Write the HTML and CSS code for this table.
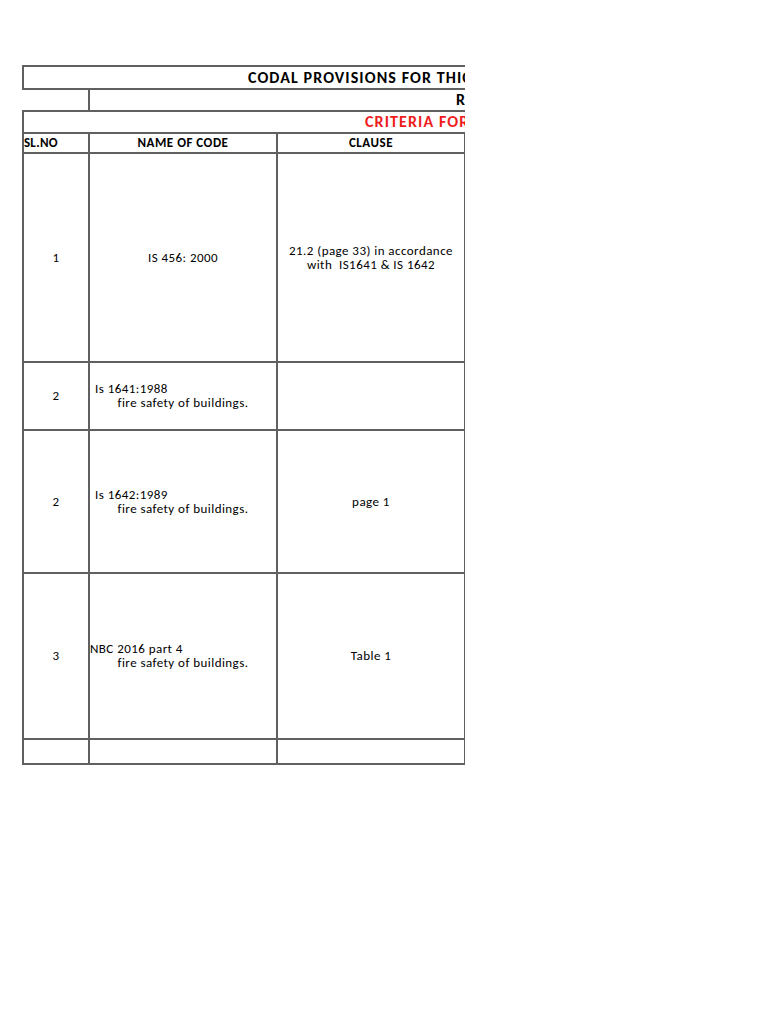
FILE: index.html
```html
<!DOCTYPE html>
<html>
<head>
<meta charset="utf-8">
<link rel="stylesheet" href="styles.css">
</head>
<body>
<div class="sheet">
  <table class="grid">
    <colgroup>
      <col class="c1"><col class="c2"><col class="c3"><col class="c4">
    </colgroup>
    <tr class="r-title">
      <td colspan="4" class="title"><span>CODAL PROVISIONS FOR THICKNESS</span></td>
    </tr>
    <tr class="r-sub">
      <td class="blank"></td>
      <td colspan="3" class="sub"><span>R</span></td>
    </tr>
    <tr class="r-crit">
      <td colspan="4" class="crit"><span>CRITERIA FOR</span></td>
    </tr>
    <tr class="r-head">
      <th class="slno">SL.NO</th>
      <th>NAME OF CODE</th>
      <th>CLAUSE</th>
      <th></th>
    </tr>
    <tr class="r1">
      <td class="num">1</td>
      <td class="ctr">IS 456: 2000</td>
      <td class="ctr">21.2 (page 33) in accordance<br>with&nbsp; IS1641 &amp; IS 1642</td>
      <td></td>
    </tr>
    <tr class="r2">
      <td class="num">2</td>
      <td class="code"><div class="l1">Is 1641:1988</div><div class="l2">fire safety of buildings.</div></td>
      <td></td>
      <td></td>
    </tr>
    <tr class="r3">
      <td class="num">2</td>
      <td class="code"><div class="l1">Is 1642:1989</div><div class="l2">fire safety of buildings.</div></td>
      <td class="ctr">page 1</td>
      <td></td>
    </tr>
    <tr class="r4">
      <td class="num">3</td>
      <td class="code"><div class="l1 tight">NBC 2016 part 4</div><div class="l2">fire safety of buildings.</div></td>
      <td class="ctr">Table 1</td>
      <td></td>
    </tr>
    <tr class="r5">
      <td></td><td></td><td></td><td></td>
    </tr>
  </table>
</div>
</body>
</html>
```

FILE: styles.css
```css
html, body {
  margin: 0;
  padding: 0;
  background: #ffffff;
}
body {
  font-family: Carlito, Lato, "Liberation Sans", sans-serif;
  color: #000;
}
.sheet {
  margin: 65px 0 0 22px;
  width: 443px;
  overflow: hidden;
}
.grid {
  border-collapse: collapse;
  table-layout: fixed;
  width: 700px;
  font-size: 13px;
  letter-spacing: 0.45px;
  line-height: 14px;
}
.c1 { width: 66px; }
.c2 { width: 188px; }
.c3 { width: 188px; }
.c4 { width: 258px; }
.grid td, .grid th {
  border: 2px solid #606060;
  padding: 0;
  overflow: hidden;
  white-space: nowrap;
}
.r-title td { height: 21px; }
.r-sub td { height: 20px; }
.r-crit td { height: 20px; }
.r-head th { height: 18px; }
.r1 td { height: 207px; }
.r2 td { height: 66px; }
.r3 td { height: 141px; }
.r4 td { height: 164px; }
.r5 td { height: 23px; }

.title {
  font-weight: bold;
  font-size: 16px;
  letter-spacing: 1.1px;
  padding-left: 224px !important;
  text-align: left;
}
.blank {
  border-left-color: transparent !important;
}
.sub {
  font-weight: bold;
  font-size: 16px;
  letter-spacing: 1.1px;
  text-align: left;
  padding-left: 366px !important;
}
.crit {
  font-weight: bold;
  font-size: 16px;
  letter-spacing: 1.1px;
  color: #ee1c1c;
  text-align: left;
  padding-left: 341px !important;
}
.r-head th {
  font-size: 13px;
  letter-spacing: 0.5px;
  font-weight: bold;
  text-align: center;
}
.r-head th.slno {
  text-align: left;
  letter-spacing: 0.2px;
}
.num, .ctr {
  text-align: center;
  vertical-align: middle;
}
.code {
  vertical-align: middle;
}
.l1 {
  padding-left: 5px;
}
.l1.tight {
  padding-left: 0;
}
.l2 {
  text-align: center;
}
```
